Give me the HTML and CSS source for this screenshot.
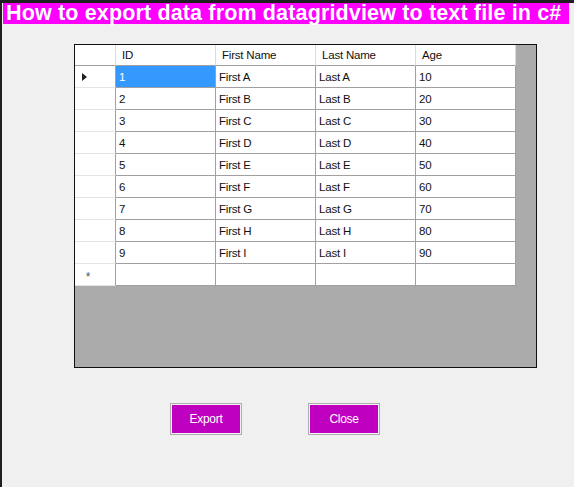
FILE: index.html
```html
<!DOCTYPE html>
<html>
<head>
<meta charset="utf-8">
<link rel="stylesheet" href="styles.css">
</head>
<body>
<div class="window">
  <div class="banner"><span class="banner-text">How to export data from datagridview to text file in c#</span></div>
  <div class="grid">
    <div class="table">
      <div class="rh hdr"></div>
      <div class="ch">ID</div>
      <div class="ch">First Name</div>
      <div class="ch">Last Name</div>
      <div class="ch">Age</div>

      <div class="rh"><span class="arrow"></span></div>
      <div class="cell sel">1</div><div class="cell">First A</div><div class="cell">Last A</div><div class="cell">10</div>
      <div class="rh"></div>
      <div class="cell">2</div><div class="cell">First B</div><div class="cell">Last B</div><div class="cell">20</div>
      <div class="rh"></div>
      <div class="cell">3</div><div class="cell">First C</div><div class="cell">Last C</div><div class="cell">30</div>
      <div class="rh"></div>
      <div class="cell">4</div><div class="cell">First D</div><div class="cell">Last D</div><div class="cell">40</div>
      <div class="rh"></div>
      <div class="cell">5</div><div class="cell">First E</div><div class="cell">Last E</div><div class="cell">50</div>
      <div class="rh"></div>
      <div class="cell">6</div><div class="cell">First F</div><div class="cell">Last F</div><div class="cell">60</div>
      <div class="rh"></div>
      <div class="cell">7</div><div class="cell">First G</div><div class="cell">Last G</div><div class="cell">70</div>
      <div class="rh"></div>
      <div class="cell">8</div><div class="cell">First H</div><div class="cell">Last H</div><div class="cell">80</div>
      <div class="rh"></div>
      <div class="cell">9</div><div class="cell">First I</div><div class="cell">Last I</div><div class="cell">90</div>
      <div class="rh star">*</div>
      <div class="cell"></div><div class="cell"></div><div class="cell"></div><div class="cell"></div>
    </div>
  </div>
  <div class="buttons">
    <div class="btn"><span class="btn-in">Export</span></div>
    <div class="btn"><span class="btn-in">Close</span></div>
  </div>
</div>
</body>
</html>
```
FILE: styles.css
```css
html, body {
  margin: 0;
  padding: 0;
  background: #f0f0f0;
}
.window {
  width: 574px;
  height: 487px;
  box-sizing: border-box;
  border-left: 2px solid #1f1f1f;
  border-top: 3px solid #1f1f1f;
  background: #f0f0f0;
  font-family: "Liberation Sans", Arial, sans-serif;
  overflow: hidden;
}
.banner {
  margin-left: 1px;
  width: 566px;
  height: 21px;
  background: #ff00ff;
  display: flex;
  align-items: center;
}
.banner-text {
  color: #fff;
  font-weight: bold;
  font-size: 21.5px;
  letter-spacing: 0.15px;
  white-space: nowrap;
  padding-left: 3px;
  line-height: 21px;
}
.grid {
  margin-top: 20px;
  margin-left: 72px;
  width: 463px;
  height: 324px;
  box-sizing: border-box;
  border: 1px solid #101010;
  background: #ababab;
}
.table {
  display: grid;
  grid-template-columns: 41px repeat(4, 100px);
  grid-template-rows: 21px repeat(10, 22px);
  font-size: 11.5px;
  letter-spacing: -0.2px;
  color: #111;
}
.table > div {
  box-sizing: border-box;
  display: flex;
  align-items: center;
  white-space: nowrap;
}
.rh {
  background: #fff;
  border-right: 1px solid #a0a0a0;
  border-bottom: 1px solid #e4e4e4;
  justify-content: center;
}
.rh.hdr {
  border-right: 1px solid #dcdcdc;
  border-bottom: 1px solid #a0a0a0;
}
.ch {
  background: #fff;
  border-right: 1px solid #dcdcdc;
  border-bottom: 1px solid #a0a0a0;
  padding-left: 6px;
}
.cell {
  background: #fff;
  border-right: 1px solid #a0a0a0;
  border-bottom: 1px solid #a0a0a0;
  padding-left: 3px;
}
.cell.sel {
  background: #3399ff;
  color: #fff;
}
.arrow {
  width: 0;
  height: 0;
  border-top: 4px solid transparent;
  border-bottom: 4px solid transparent;
  border-left: 5px solid #202020;
  margin-left: -22px;
}
.star {
  color: #555;
  font-size: 12px;
  padding-right: 14px;
  padding-top: 5px;
}
.buttons {
  display: flex;
  gap: 66px;
  margin-left: 168px;
  margin-top: 35px;
}
.btn {
  width: 72px;
  height: 32px;
  box-sizing: border-box;
  border: 1px solid #adadad;
  padding: 1px;
  background: #f4f4f4;
  display: flex;
}
.btn-in {
  flex: 1;
  background: #c000c0;
  color: #fff;
  font-size: 12px;
  letter-spacing: -0.3px;
  display: flex;
  align-items: center;
  justify-content: center;
}
```
